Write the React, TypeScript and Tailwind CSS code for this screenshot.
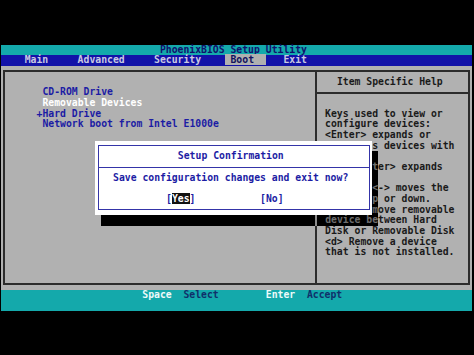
import React from "react";

// text-mode grid: one cell is 5.89px wide, 10.65px tall (80 x 25)
const HELP_LINES = [
    "Keys used to view or",
    "configure devices:",
    "<Enter> expands or",
    "collapses devices with",
    "a + or -",
    "<Ctrl+Enter> expands",
    "all",
    "<+> and <-> moves the",
    "device up or down.",
    "<n> May move removable",
    "device between Hard",
    "Disk or Removable Disk",
    "<d> Remove a device",
    "that is not installed.",
];

function TabBar() {
    return (
        <div className="h-[10.65px] bg-[#1212a8] text-[#c9c9e2] whitespace-pre">
            {"    Main     Advanced     Security    "}
            <span className="bg-[#b0b0b0] text-[#12125e]">{" Boot  "}</span>
            {"   Exit"}
        </div>
    );
}

function ConfirmDialog() {
    return (
        <>
            {/* shadow, with the dimmed characters underneath */}
            <div className="absolute left-[371.07px] top-[106.5px] w-[5.89px] h-[74.55px] bg-black text-[#6e6e6e] whitespace-pre">
                {"\nt\n\n<\np\nm\ne"}
            </div>
            <div className="absolute left-[100.13px] top-[170.4px] w-[270.94px] h-[10.65px] bg-black text-[#6e6e6e] flex">
                <div className="w-[213.97px]" />
                <div className="w-[2px] h-full bg-[#8c8c8c]" />
                <div className="w-[7.85px]" />
                <div className="whitespace-pre">device b</div>
            </div>

            <div className="absolute left-[94.24px] top-[95.85px] w-[276.83px] h-[74.55px] bg-white px-[2.445px] py-[4.825px] text-[#1c1ca4]">
                <div className="h-full border border-[#3434a8] flex flex-col">
                    <div className="h-[21.3px] border-b border-[#3434a8] pt-[4.825px] pl-[79.015px] whitespace-pre">
                        Setup Confirmation
                    </div>
                    <div className="pt-[4.825px] pl-[14.225px] whitespace-pre">
                        {"Save configuration changes and exit now?\n\n         ["}
                        <span className="bg-[#111111] text-white">Yes</span>
                        {"]           [No]"}
                    </div>
                </div>
            </div>
        </>
    );
}

export default function App() {
    return (
        <div className="w-[474px] h-[355px] bg-black overflow-hidden font-['DejaVu_Sans_Mono','Liberation_Mono',monospace] font-bold text-[9.78px] leading-[10.65px]">
            <div className="pt-[44.8px] pl-[1.2px]">
                <div className="relative w-[471.2px]">
                    <div className="h-[10.65px] bg-[#14a9ab] text-[#10106e] whitespace-pre">
                        {"                           PhoenixBIOS Setup Utility"}
                    </div>
                    <TabBar />

                    {/* main panel, rows 2-22 */}
                    <div className="h-[223.65px] bg-[#b1b1b1] px-[1.945px] py-[4.325px]">
                        <div className="h-full flex border-2 border-[#2c2c2c]">
                            <div className="w-[312.17px] border-r-2 border-[#2c2c2c] pt-[14.975px] pl-[31.395px] whitespace-pre text-[#1c1ca4]">
                                {" CD-ROM Drive\n"}
                                <span className="text-white">{" Removable Devices"}</span>
                                {"\n+Hard Drive\n Network boot from Intel E1000e"}
                            </div>
                            <div className="flex-1 flex flex-col text-[#1a1a1a]">
                                <div className="h-[21.3px] border-b-2 border-[#2c2c2c] pt-[4.325px] pl-[19.615px] whitespace-pre">
                                    Item Specific Help
                                </div>
                                <div className="pt-[14.975px] pl-[7.835px] whitespace-pre">
                                    {HELP_LINES.join("\n")}
                                </div>
                            </div>
                        </div>
                    </div>

                    {/* key legend, rows 23-24 */}
                    <div className="h-[21.3px] bg-[#14a9ab] whitespace-pre">
                        {"                        "}
                        <span className="text-[#eefafa]">Space</span>
                        {"  "}
                        <span className="text-[#10306a]">Select</span>
                        {"        "}
                        <span className="text-[#eefafa]">Enter</span>
                        {"  "}
                        <span className="text-[#10306a]">Accept</span>
                    </div>

                    <ConfirmDialog />
                </div>
            </div>
        </div>
    );
}
